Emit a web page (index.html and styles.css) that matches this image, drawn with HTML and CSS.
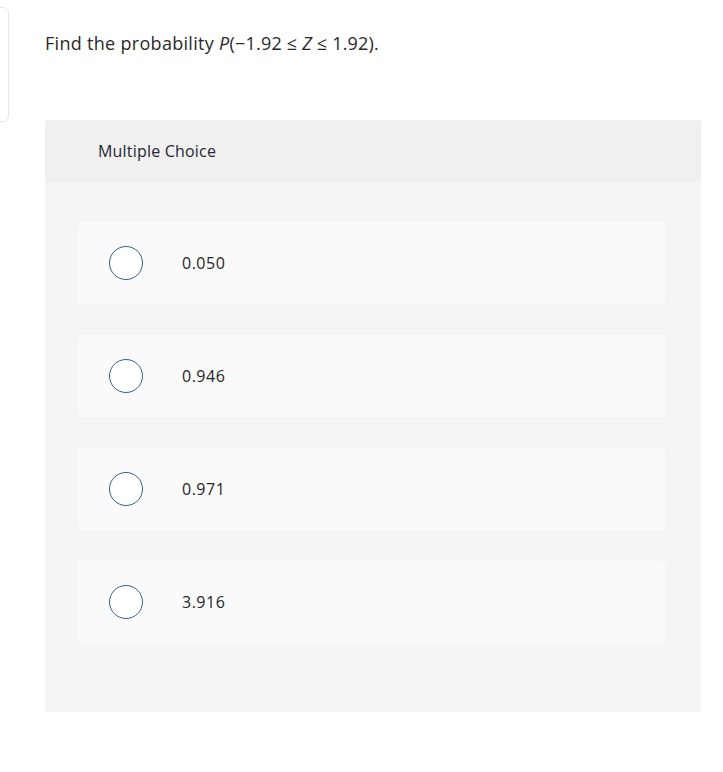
FILE: index.html
```html
<!DOCTYPE html>
<html>
<head>
<meta charset="utf-8">
<link rel="stylesheet" href="styles.css">
</head>
<body>
<div class="page">
  <div class="side-card"></div>
  <div class="main">
    <p class="question">Find the probability <span class="math"><i>P</i>(−1.92 ≤ <i>Z</i> ≤ 1.92)</span>.</p>
    <section class="panel">
      <div class="panel-head">Multiple Choice</div>
      <div class="options">
        <label class="option"><span class="radio"></span><span class="opt-text">0.050</span></label>
        <label class="option"><span class="radio"></span><span class="opt-text">0.946</span></label>
        <label class="option"><span class="radio"></span><span class="opt-text">0.971</span></label>
        <label class="option"><span class="radio"></span><span class="opt-text">3.916</span></label>
      </div>
    </section>
  </div>
</div>
</body>
</html>
```
FILE: styles.css
```css
html, body {
  margin: 0;
  padding: 0;
  background: #fff;
}
body {
  font-family: "Open Sans", "Liberation Sans", sans-serif;
  color: #222;
}
.page {
  position: relative;
  width: 723px;
  height: 772px;
  overflow: hidden;
}
.side-card {
  position: absolute;
  left: -20px;
  top: 7px;
  width: 29px;
  height: 115px;
  border: 1px solid #e6e6e6;
  border-radius: 6px;
  box-sizing: border-box;
}
.main {
  padding-left: 45px;
  padding-right: 22px;
  padding-top: 30px;
}
.question {
  margin: 0;
  font-size: 18px;
  line-height: 26px;
  letter-spacing: 0.3px;
  color: #2a2a2a;
}
.math {
  letter-spacing: 0.2px;
}
.math i {
  font-style: italic;
}
.panel {
  margin-top: 64px;
  background: #f5f5f5;
  border-radius: 3px;
  height: 592px;
  overflow: hidden;
}
.panel-head {
  background: #f0f0f0;
  height: 62px;
  box-sizing: border-box;
  padding-left: 53px;
  display: flex;
  align-items: center;
  font-size: 16px;
  letter-spacing: 0.2px;
  color: #262630;
}
.options {
  padding: 40px 36px 0 33px;
  display: flex;
  flex-direction: column;
  gap: 31px;
}
.option {
  height: 82px;
  background: #fafafa;
  border-radius: 4px;
  display: flex;
  align-items: center;
  padding-left: 31px;
}
.radio {
  width: 34px;
  height: 34px;
  box-sizing: border-box;
  border: 1.5px solid #355f8c;
  border-radius: 50%;
  background: #fff;
  flex: none;
}
.opt-text {
  margin-left: 39px;
  font-size: 16px;
  letter-spacing: 0.5px;
  color: #262626;
}
```
